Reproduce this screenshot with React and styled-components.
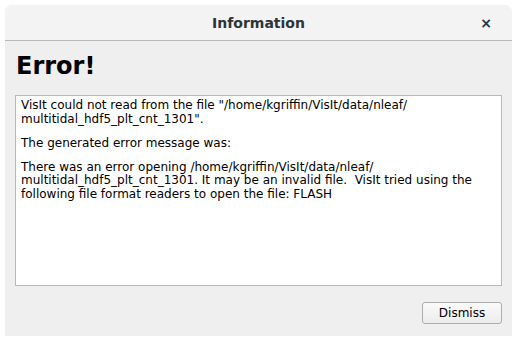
import React from 'react'
import styled, { createGlobalStyle } from 'styled-components'

const GlobalStyle = createGlobalStyle`
  html, body {
    margin: 0;
    padding: 0;
    background: #ffffff;
  }
  body {
    font-family: "DejaVu Sans", Verdana, sans-serif;
  }
`

const Page = styled.div`
  width: 521px;
  height: 345px;
  padding: 5px 9px 9px 5px;
  box-sizing: border-box;
`

const Window = styled.div`
  width: 507px;
  height: 331px;
  background: #efefef;
  border-radius: 7px 7px 0 0;
  display: flex;
  flex-direction: column;
  overflow: hidden;
`

const TitleBar = styled.div`
  height: 35px;
  flex: none;
  background: #f3f3f3;
  border-bottom: 1px solid #b9b9b4;
  display: flex;
  align-items: center;
  justify-content: center;
  position: relative;
`

const Title = styled.div`
  font-size: 14px;
  font-weight: bold;
  color: #2e3436;
`

const Close = styled.div`
  position: absolute;
  right: 20px;
  top: 10px;
  font-size: 14px;
  font-weight: bold;
  color: #2e3436;
`

const Body = styled.div`
  flex: 1;
  display: flex;
  flex-direction: column;
  padding: 8px 10px 10px 10px;
`

const Heading = styled.h1`
  margin: 0 0 12px 1px;
  font-size: 24px;
  line-height: 34px;
  font-weight: bold;
  color: #000;
`

const MessageBox = styled.div`
  height: 191px;
  background: #fff;
  border: 1px solid #b8b8b8;
  box-sizing: border-box;
  padding: 3px 5px;
  font-size: 12px;
  line-height: 13.6px;
  color: #000;
`

const Para = styled.p`
  margin: 0 0 10.4px 0;
`

const Footer = styled.div`
  display: flex;
  justify-content: flex-end;
  margin-top: 16px;
`

const Button = styled.button`
  width: 80px;
  height: 22px;
  border: 1px solid #adadad;
  border-radius: 3px;
  background: linear-gradient(#fafafa, #ececec);
  font-family: "DejaVu Sans", Verdana, sans-serif;
  font-size: 12px;
  color: #000;
  padding: 0;
`

const App = () => {
  return (
    <>
      <GlobalStyle />
      <Page>
        <Window>
          <TitleBar>
            <Title>Information</Title>
            <Close>×</Close>
          </TitleBar>
          <Body>
            <Heading>Error!</Heading>
            <MessageBox>
              <Para>
                VisIt could not read from the file "/home/kgriffin/VisIt/data/nleaf/
                <br />
                multitidal_hdf5_plt_cnt_1301".
              </Para>
              <Para>The generated error message was:</Para>
              <Para>
                There was an error opening /home/kgriffin/VisIt/data/nleaf/
                <br />
                multitidal_hdf5_plt_cnt_1301. It may be an invalid file.&nbsp; VisIt tried using the
                <br />
                following file format readers to open the file: FLASH
              </Para>
            </MessageBox>
            <Footer>
              <Button>Dismiss</Button>
            </Footer>
          </Body>
        </Window>
      </Page>
    </>
  )
}

export default App
